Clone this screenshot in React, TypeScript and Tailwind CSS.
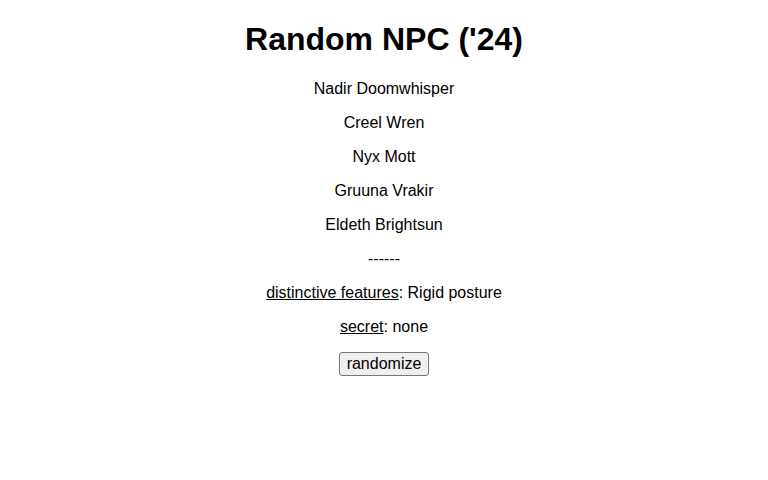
import { useState } from "react";

const NAMES = [
  "Nadir Doomwhisper",
  "Creel Wren",
  "Nyx Mott",
  "Gruuna Vrakir",
  "Eldeth Brightsun",
];

const FEATURES = ["Rigid posture", "Nervous twitch", "Missing tooth", "Booming voice"];
const SECRETS = ["none", "owes a debt", "is a spy", "hides a relic"];

function pick<T>(list: T[]) {
  return list[Math.floor(Math.random() * list.length)];
}

export default function App() {
  const [feature, setFeature] = useState(FEATURES[0]);
  const [secret, setSecret] = useState(SECRETS[0]);

  return (
    <div className="flex min-h-screen flex-col items-center gap-4 bg-white pt-[21.44px] text-center font-['Liberation_Sans',Arial,sans-serif] text-[16px] leading-[normal] text-black">
      <h1 className="mb-[5.44px] text-[32px] font-bold leading-[normal]">Random NPC ('24)</h1>

      {NAMES.map((name) => (
        <p key={name}>{name}</p>
      ))}

      <p>------</p>

      <p>
        <span className="underline">distinctive features</span>: {feature}
      </p>
      <p>
        <span className="underline">secret</span>: {secret}
      </p>

      <button
        onClick={() => {
          setFeature(pick(FEATURES));
          setSecret(pick(SECRETS));
        }}
        className="rounded-[3px] border border-[#767676] bg-[#efefef] px-[7px] py-[2px] text-[16px] leading-[normal] text-black"
      >
        randomize
      </button>
    </div>
  );
}
